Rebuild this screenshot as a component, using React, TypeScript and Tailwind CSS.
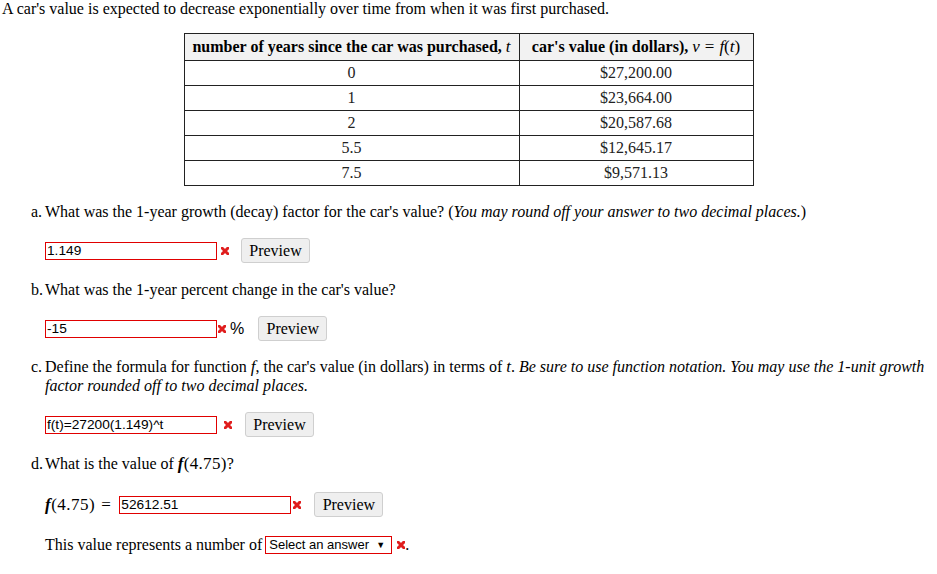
import React from 'react';

const rows = [
  { t: '0', v: '$27,200.00' },
  { t: '1', v: '$23,664.00' },
  { t: '2', v: '$20,587.68' },
  { t: '5.5', v: '$12,645.17' },
  { t: '7.5', v: '$9,571.13' },
];

const sans = { fontFamily: '"Liberation Sans", Arial, sans-serif' };

const WrongMark: React.FC<{ className?: string }> = ({ className = '' }) => (
  <svg width="8" height="8" viewBox="0 0 8 8" className={`inline-block shrink-0 ${className}`}>
    <path d="M1.2 1.2 L6.8 6.8 M6.8 1.2 L1.2 6.8" stroke="#e01e1e" strokeWidth="3" strokeLinecap="square" />
  </svg>
);

const Answer: React.FC<{ value: string }> = ({ value }) => (
  <span
    className="w-[172px] h-[18px] border border-[#e00000] bg-white pl-[1px] text-[13.7px] leading-[16px] text-black inline-flex items-center whitespace-nowrap overflow-hidden"
    style={sans}
  >
    {value}
  </span>
);

const PreviewBtn: React.FC<{ className?: string }> = ({ className = '' }) => (
  <button
    className={`h-[25px] w-[69px] rounded-[3px] border border-[#cfcfcf] bg-[#efefef] text-[16px] leading-[18px] text-black ${className}`}
  >
    Preview
  </button>
);

const Question: React.FC<{ label: string; children: React.ReactNode; className?: string }> = ({
  label,
  children,
  className = '',
}) => (
  <div className={`flex ${className}`}>
    <span className="w-[14px] shrink-0">{label}</span>
    <div className="flex-1">{children}</div>
  </div>
);

export default function App() {
  return (
    <div
      className="w-[937px] h-[574px] bg-white text-black text-[16px] overflow-hidden"
      style={{ fontFamily: '"Liberation Serif", "Times New Roman", serif' }}
    >
      <p className="pl-[2px] leading-[17px]">
        A car's value is expected to decrease exponentially over time from when it was first purchased.
      </p>

      {/* data table */}
      <table className="mx-auto mt-[16px] border-collapse table-fixed w-[569px]">
        <thead>
          <tr className="bg-[#f2f2f2]">
            <th className="w-[335px] border border-[#222] py-[4px] leading-[18px] font-bold text-center whitespace-nowrap">
              number of years since the car was purchased, <i className="font-normal text-[17px]">t</i>
            </th>
            <th className="w-[234px] border border-[#222] py-[4px] leading-[18px] font-bold text-center whitespace-nowrap">
              car's value (in dollars), <i className="font-normal text-[17px]">v</i>
              <span className="font-normal text-[17px] mx-[5px]">=</span>
              <i className="font-normal text-[17px]">f</i>
              <span className="font-normal text-[17px]">(</span>
              <i className="font-normal text-[17px]">t</i>
              <span className="font-normal text-[17px]">)</span>
            </th>
          </tr>
        </thead>
        <tbody>
          {rows.map((r) => (
            <tr key={r.t}>
              <td className="border border-[#222] py-[3px] leading-[18px] text-center text-[#222]">{r.t}</td>
              <td className="border border-[#222] py-[3px] leading-[18px] text-center text-[#222]">{r.v}</td>
            </tr>
          ))}
        </tbody>
      </table>

      <div className="pl-[31px] leading-[19px]">
        {/* a */}
        <Question label="a." className="mt-[16px]">
          <p>
            What was the 1-year growth (decay) factor for the car's value? (
            <i>You may round off your answer to two decimal places.</i>)
          </p>
          <div className="mt-[17px] flex items-center">
            <Answer value="1.149" />
            <WrongMark className="ml-[4px]" />
            <PreviewBtn className="ml-[12px]" />
          </div>
        </Question>

        {/* b */}
        <Question label="b." className="mt-[17px]">
          <p>What was the 1-year percent change in the car's value?</p>
          <div className="mt-[17px] flex items-center">
            <Answer value="-15" />
            <WrongMark className="ml-[1px]" />
            <span className="ml-[4px] text-[16px]" style={sans}>
              %
            </span>
            <PreviewBtn className="ml-[14px]" />
          </div>
        </Question>

        {/* c */}
        <Question label="c." className="mt-[16px]">
          <p>
            Define the formula for function <i className="text-[17px]">f</i>, the car's value (in dollars) in terms of{' '}
            <i className="text-[17px]">t</i>.{' '}
            <i>
              Be sure to use function notation. You may use the 1-unit growth factor rounded off to two decimal
              places.
            </i>
          </p>
          <div className="mt-[17px] flex items-center">
            <Answer value="f(t)=27200(1.149)^t" />
            <WrongMark className="ml-[7px]" />
            <PreviewBtn className="ml-[13px]" />
          </div>
        </Question>

        {/* d */}
        <Question label="d." className="mt-[17px]">
          <p>
            What is the value of{' '}
            <span className="text-[17px] tracking-[0.3px]">
              <i className="font-bold">f</i>(4.75)
            </span>
            ?
          </p>
          <div className="mt-[19px] flex items-center">
            <span className="mr-[2px] text-[17px] tracking-[0.5px]">
              <i className="font-bold">f</i>(4.75)<span className="mx-[6px]">=</span>
            </span>
            <Answer value="52612.51" />
            <WrongMark className="ml-[2px]" />
            <PreviewBtn className="ml-[13px]" />
          </div>
          <div className="mt-[18px] flex items-center">
            <span>This value represents a number of</span>
            <span
              className="ml-[3px] w-[127px] h-[18px] border border-[#e00000] bg-white pl-[3px] pr-[6px] text-[13px] leading-[16px] inline-flex items-center justify-between"
              style={sans}
            >
              <span>Select an answer</span>
              <span className="text-[9px]">▼</span>
            </span>
            <WrongMark className="ml-[5px]" />
            <span>.</span>
          </div>
        </Question>
      </div>
    </div>
  );
}
